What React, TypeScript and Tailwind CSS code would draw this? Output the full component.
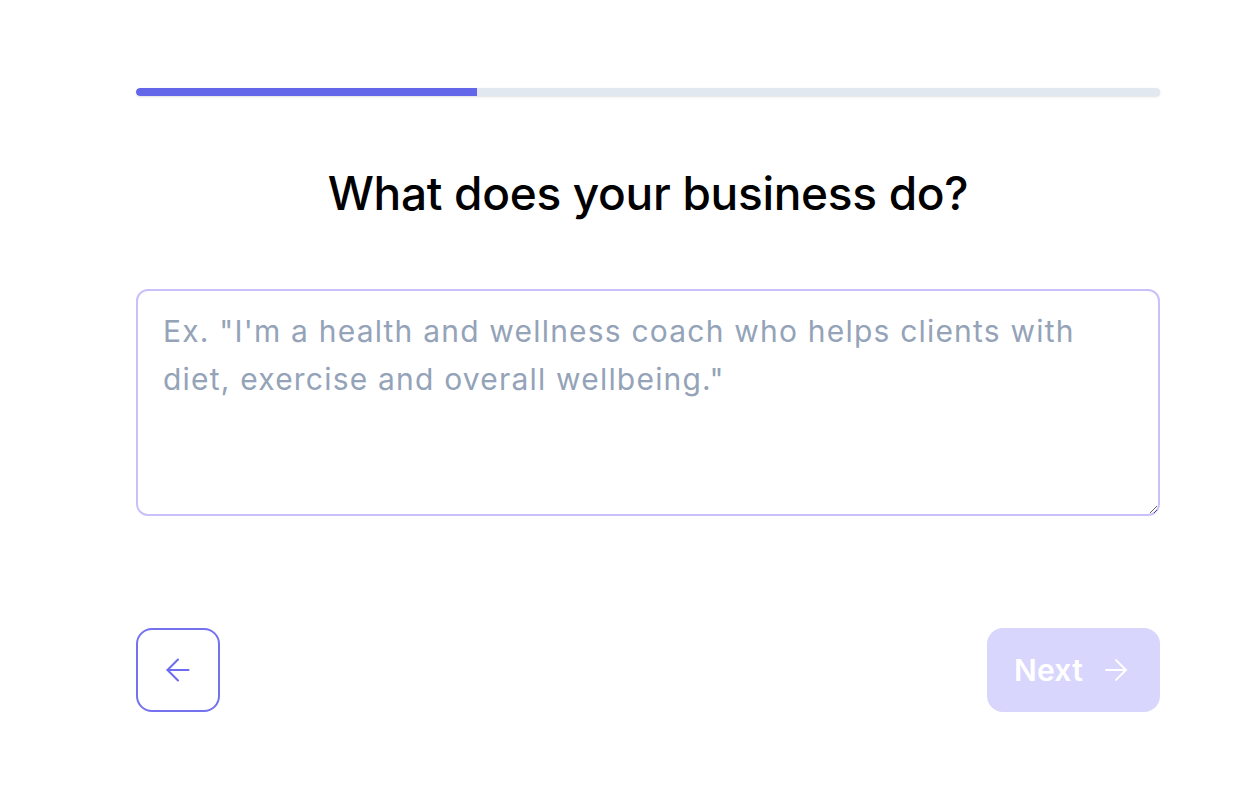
import React from "react";

export default function App() {
  return (
    <div className="w-[1244px] h-[804px] bg-white" style={{ fontFamily: "Inter, 'Noto Sans', sans-serif" }}>
      <div className="w-[1024px] ml-[136px] pt-[88px]">
        <div className="h-[8px] w-full rounded-full bg-[#e2e8f0] shadow-sm overflow-hidden">
          <div className="h-full w-[341px] bg-[#6366e8] rounded-l-full" />
        </div>
        <h1 className="mt-[67px] text-center text-[46px] leading-[60px] font-medium text-black tracking-[-0.3px]">
          What does your business do?
        </h1>
        <textarea
          className="mt-[66px] block w-full h-[227px] rounded-[12px] border-2 border-[#c9c2fa] px-[25px] pt-[16px] pb-[16px] text-[30px] leading-[48px] tracking-[1.2px] text-slate-700 placeholder:text-[#94a3b8] outline-none"
          placeholder={'Ex. "I\'m a health and wellness coach who helps clients with diet, exercise and overall wellbeing."'}
        />
        <div className="mt-[112px] flex justify-between">
          <button className="w-[84px] h-[84px] rounded-[16px] border-2 border-[#7472ef] flex items-center justify-center text-[#6d6bf0]">
            <svg width="36" height="36" viewBox="0 0 24 24" fill="none" stroke="currentColor" strokeWidth="1.4" strokeLinecap="round" strokeLinejoin="round">
              <path d="M19 12H5" />
              <path d="M12 19l-7-7 7-7" />
            </svg>
          </button>
          <button className="w-[173px] h-[84px] rounded-[16px] bg-[#d8d6fc] flex items-center justify-center gap-[16px] text-white text-[30px] font-semibold tracking-[0.3px]">
            <span>Next</span>
            <svg width="34" height="34" viewBox="0 0 24 24" fill="none" stroke="currentColor" strokeWidth="1.4" strokeLinecap="round" strokeLinejoin="round">
              <path d="M5 12h14" />
              <path d="M12 5l7 7-7 7" />
            </svg>
          </button>
        </div>
      </div>
    </div>
  );
}
